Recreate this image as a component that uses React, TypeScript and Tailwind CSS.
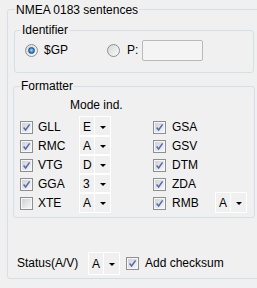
import React from "react";

const font = "font-['Liberation_Sans',Arial,sans-serif]";

function CheckBox({ checked }: { checked: boolean }) {
  return (
    <span className="flex h-[13px] w-[13px] shrink-0 items-center justify-center border border-[#8e8f8f] bg-[#f4f4f4]">
      <span className="relative h-[11px] w-[11px] border border-[#f6f6f6] bg-gradient-to-br from-[#cfd2d7] to-[#f5f5f5]">
        {checked && (
          <svg viewBox="0 0 9 9" className="absolute inset-0 h-[9px] w-[9px]">
            <path d="M1.6 4.6 L3.6 7 L7.6 1.4" fill="none" stroke="#5469ad" strokeWidth="1.5" />
          </svg>
        )}
      </span>
    </span>
  );
}

function Radio({ checked }: { checked: boolean }) {
  return (
    <span className="flex h-[13px] w-[13px] shrink-0 items-center justify-center rounded-full border border-[#8e8f8f] bg-gradient-to-br from-[#d4d6d9] to-[#fbfbfb]">
      {checked && (
        <span className="h-[7px] w-[7px] rounded-full border border-[#1f4f86] bg-[radial-gradient(circle_at_50%_45%,#a6e0ff_0%,#3c8dd8_50%,#1b5a9c_100%)]" />
      )}
    </span>
  );
}

function Combo({ value, tall }: { value: string; tall?: boolean }) {
  return (
    <span
      className={
        "flex w-[32px] shrink-0 border border-white " + (tall ? "h-[23px]" : "h-[21px]")
      }
    >
      <span className="flex w-[14px] items-center pl-[3px] pt-[2px]">{value}</span>
      <span className="flex flex-1 items-center justify-center border-l border-white pt-px">
        <span className="h-0 w-0 border-x-[3px] border-t-[3px] border-x-transparent border-t-black" />
      </span>
    </span>
  );
}

function Group({ title, className, children }: { title: string; className: string; children: React.ReactNode }) {
  return (
    <div className={"relative rounded-[3px] border border-[#d5dfe5] " + className}>
      <span className="absolute -top-[7px] left-[6px] bg-[#f0f0f0] px-px">{title}</span>
      {children}
    </div>
  );
}

const rows = [
  { l: "GLL", lc: true, mode: "E", r: "GSA", rc: true },
  { l: "RMC", lc: true, mode: "A", r: "GSV", rc: true },
  { l: "VTG", lc: true, mode: "D", r: "DTM", rc: true },
  { l: "GGA", lc: true, mode: "3", r: "ZDA", rc: true },
  { l: "XTE", lc: false, mode: "A", r: "RMB", rc: true, rmode: "A" },
];

export default function App() {
  return (
    <div className={"h-[288px] w-[257px] overflow-hidden bg-[#f0f0f0] pl-[7px] pt-[9px] text-[12px] leading-[13px] text-black " + font}>
      <div className="relative h-[270px] w-[262px] rounded-[3px] border border-[#d5dfe5]">
        <span className="absolute -top-[6px] left-[7px] bg-[#f0f0f0] px-px">NMEA 0183 sentences</span>

        <Group title="Identifier" className="ml-[6px] mt-[20px] h-[43px] w-[240px]">
          <div className="flex items-center pl-[10px] pt-[9px]">
            <label className="flex w-[82px] items-center gap-[6px]">
              <Radio checked />
              <span>$GP</span>
            </label>
            <label className="flex items-center gap-[7px]">
              <Radio checked={false} />
              <span>P:</span>
            </label>
            <span className="ml-[4px] h-[21px] w-[61px] rounded-[2px] border border-[#b9b9b9] bg-[#f4f4f4]" />
          </div>
        </Group>

        <Group title="Formatter" className="ml-[5px] mt-[13px] h-[132px] w-[242px]">
          <div className="ml-[56px] pt-[12px]">Mode ind.</div>
          <div className="mt-[6px] flex flex-col pl-[6px]">
            {rows.map((row) => (
              <div key={row.l} className="flex h-[19px] items-center">
                <CheckBox checked={row.lc} />
                <span className="ml-[5px] w-[41px]">{row.l}</span>
                <span className="-mt-[2px] self-start">
                  <Combo value={row.mode} />
                </span>
                <span className="ml-[42px]">
                  <CheckBox checked={row.rc} />
                </span>
                <span className="ml-[6px] w-[43px]">{row.r}</span>
                {row.rmode && (
                  <span className="-mt-[2px] self-start">
                    <Combo value={row.rmode} />
                  </span>
                )}
              </div>
            ))}
          </div>
        </Group>

        <div className="ml-[9px] mt-[34px] flex h-[23px] items-center">
          <span className="w-[71px]">Status(A/V)</span>
          <Combo value="A" tall />
          <span className="ml-[6px]">
            <CheckBox checked />
          </span>
          <span className="ml-[6px]">Add checksum</span>
        </div>
      </div>
    </div>
  );
}
